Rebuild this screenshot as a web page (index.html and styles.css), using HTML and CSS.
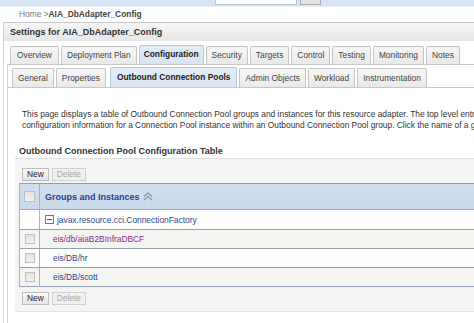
FILE: index.html
```html
<!DOCTYPE html>
<html>
<head>
<meta charset="utf-8">
<link rel="stylesheet" href="styles.css">
</head>
<body>
<div class="page">
  <div class="topbar"><span class="search"></span><span class="go"></span></div>
  <div class="crumb"><span class="home">Home &gt;</span><b>AIA_DbAdapter_Config</b></div>
  <div class="settings">
    <div class="settings-head">Settings for AIA_DbAdapter_Config</div>
    <div class="tabs1">
      <span class="tab">Overview</span>
      <span class="tab">Deployment Plan</span>
      <span class="tab sel">Configuration</span>
      <span class="tab">Security</span>
      <span class="tab">Targets</span>
      <span class="tab">Control</span>
      <span class="tab">Testing</span>
      <span class="tab">Monitoring</span>
      <span class="tab">Notes</span>
    </div>
    <div class="panel">
      <div class="tabs2">
        <span class="tab">General</span>
        <span class="tab">Properties</span>
        <span class="tab sel">Outbound Connection Pools</span>
        <span class="tab">Admin Objects</span>
        <span class="tab">Workload</span>
        <span class="tab">Instrumentation</span>
      </div>
      <div class="body">
        <div class="desc">
          <div class="line">This page displays a table of Outbound Connection Pool groups and instances for this resource adapter. The top level entri</div>
          <div class="line">configuration information for a Connection Pool instance within an Outbound Connection Pool group. Click the name of a gr</div>
        </div>
        <div class="heading">Outbound Connection Pool Configuration Table</div>
        <div class="tablebox">
          <div class="btns"><span class="btn">New</span><span class="btn dis">Delete</span></div>
          <div class="grid">
            <div class="row head">
              <div class="chk"><span class="cb big"></span></div>
              <div class="cell"><span class="htext">Groups and Instances</span>
                <svg class="sorticon" width="10" height="9" viewBox="0 0 10 9"><path d="M1 4.5 L5 1 L9 4.5 M1 8 L5 4.5 L9 8" fill="none" stroke="#7f95b8" stroke-width="1.2"/></svg>
              </div>
            </div>
            <div class="row grp">
              <div class="chk"></div>
              <div class="cell"><span class="minus"></span><span class="lnk">javax.resource.cci.ConnectionFactory</span></div>
            </div>
            <div class="row alt">
              <div class="chk"><span class="cb"></span></div>
              <div class="cell"><span class="lnk visited">eis/db/aiaB2BInfraDBCF</span></div>
            </div>
            <div class="row">
              <div class="chk"><span class="cb"></span></div>
              <div class="cell"><span class="lnk">eis/DB/hr</span></div>
            </div>
            <div class="row alt">
              <div class="chk"><span class="cb"></span></div>
              <div class="cell"><span class="lnk">eis/DB/scott</span></div>
            </div>
          </div>
          <div class="btns bottom"><span class="btn">New</span><span class="btn dis">Delete</span></div>
        </div>
      </div>
    </div>
  </div>
</div>
</body>
</html>
```

FILE: styles.css
```css
html, body {
  margin: 0;
  padding: 0;
  background: #ffffff;
  overflow: hidden;
}
.page {
  width: 474px;
  height: 323px;
  overflow: hidden;
  font-family: "Liberation Sans", Arial, sans-serif;
  font-size: 8.4px;
  color: #333333;
}
.topbar {
  height: 6px;
  background: #d8e5f5;
  border-bottom: 1px solid #e6eef8;
  display: flex;
  align-items: flex-start;
  padding-left: 215px;
}
.search {
  width: 80px;
  height: 4px;
  background: #ffffff;
  border: 1px solid #b8c4d2;
  border-top: none;
}
.go {
  width: 19px;
  height: 4px;
  margin-left: 3px;
  background: #e4e4e4;
  border: 1px solid #b0b0b0;
  border-top: none;
}
.crumb {
  height: 15px;
  line-height: 15px;
  padding-left: 19px;
  color: #555555;
}
.crumb .home { color: #777777; }
.crumb b { color: #444444; }
.settings {
  margin-left: 3px;
  width: 700px;
  border-left: 1px solid #d0d0d0;
}
.settings-head {
  height: 18px;
  line-height: 18px;
  border-top: 1px solid #c8c8c8;
  background: linear-gradient(#f6f6f6, #e6e6e6);
  font-weight: bold;
  font-size: 9px;
  color: #333333;
  padding-left: 6px;
}
.tabs1 {
  display: flex;
  gap: 2px;
  padding-top: 4px;
  padding-left: 6px;
  height: 19px;
  align-items: flex-end;
  background: #ffffff;
}
.tab {
  display: inline-block;
  height: 17px;
  line-height: 17px;
  padding: 0 5px;
  border: 1px solid #c4c4c4;
  border-bottom: none;
  background: linear-gradient(#f7f7f7, #e9e9e9);
  color: #444444;
  white-space: nowrap;
  border-radius: 2px 2px 0 0;
}
.tabs1 .tab:first-child { padding: 0 6px; }
.tab.sel {
  background: linear-gradient(#e4edf6, #d8e4f1);
  font-weight: bold;
  color: #222222;
  border-color: #b8c8da;
  height: 18px;
}
.tabs1 .tab.sel { padding: 0 4px; }
.panel {
  margin-left: 3px;
  border-left: 1px solid #d4d4d4;
  border-top: 1px solid #c8c8c8;
  height: 260px;
}
.tabs2 {
  display: flex;
  gap: 2px;
  padding-left: 4px;
  height: 22px;
  align-items: flex-end;
  border-bottom: 1px solid #c8c8c8;
}
.tabs2 .tab { height: 18px; line-height: 18px; padding: 0 5px; }
.tabs2 .tab.sel { height: 19px; padding: 0 6px; margin-left: 2px; }
.body {
  padding-left: 7px;
}
.desc {
  padding-top: 21px;
  padding-left: 7px;
}
.line {
  white-space: nowrap;
  line-height: 11px;
  color: #333333;
}
.heading {
  margin-top: 15px;
  padding-left: 4px;
  font-weight: bold;
  font-size: 9px;
  line-height: 11px;
  color: #333333;
}
.tablebox {
  margin-top: 1px;
  background: #f4f4f4;
  border-top: 1px solid #e2e2e2;
  border-bottom: 1px solid #e2e2e2;
  height: 152px;
  padding-left: 4px;
}
.btns {
  display: flex;
  gap: 3px;
  padding-left: 3px;
  padding-top: 9px;
  height: 13px;
}
.btns.bottom { padding-top: 5px; }
.btn {
  height: 11px;
  line-height: 11px;
  padding: 0 4px;
  border: 1px solid #bdbdbd;
  background: linear-gradient(#fafafa, #e4e4e4);
  color: #222222;
}
.btn.dis {
  color: #aaaaaa;
  background: #f0f0f0;
  border-color: #d0d0d0;
  padding: 0 4px;
}
.grid {
  margin-top: 2px;
  border-left: 1px solid #a8b3c0;
  border-top: 1px solid #8e9cad;
}
.row {
  display: flex;
  height: 18px;
  border-bottom: 1px solid #95a2b2;
  background: #fdfefd;
}
.row.alt { background: #f4f4f1; }
.row.head {
  height: 25px;
  background: linear-gradient(#d2dfef, #cad9ec);
  border-bottom: 1px solid #9aa9bb;
}
.row.grp { height: 19px; }
.chk {
  width: 19px;
  border-right: 1px solid #a8b3c0;
  display: flex;
  align-items: center;
  justify-content: center;
}
.cb {
  width: 8px;
  height: 8px;
  border: 1px solid #bfbfbf;
  background: linear-gradient(#e2e2e2, #f2f2f2);
}
.cb.big { width: 9px; height: 9px; }
.cell {
  display: flex;
  align-items: center;
  padding-left: 5px;
  white-space: nowrap;
}
.htext {
  font-weight: bold;
  color: #23458c;
  font-size: 9px;
}
.sorticon { margin-left: 3px; }
.minus {
  width: 7px;
  height: 7px;
  border: 1px solid #777777;
  background: #ffffff;
  position: relative;
  margin-right: 3px;
}
.minus::after {
  content: "";
  position: absolute;
  left: 1px;
  right: 1px;
  top: 3px;
  height: 1px;
  background: #555555;
}
.lnk { color: #2b4a8c; }
.row:not(.grp) .lnk { margin-left: 8px; }
.lnk.visited { color: #8a2a8a; }
```
